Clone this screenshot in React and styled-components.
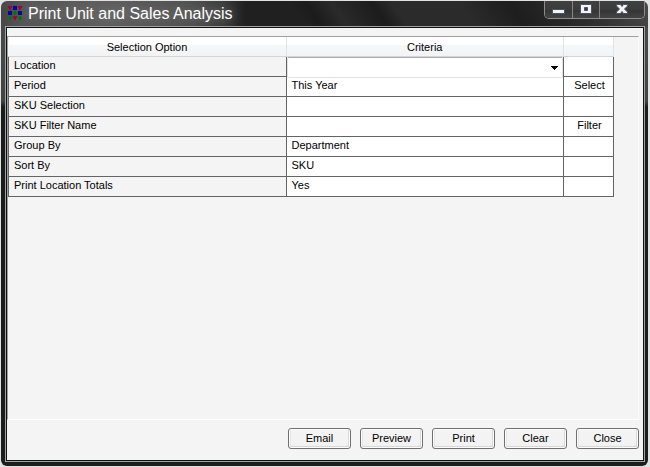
import { useState } from "react";
import styled, { createGlobalStyle } from "styled-components";

const rows = [
    { option: "Location", type: "select" },
    { option: "Period", value: "This Year", action: "Select" },
    { option: "SKU Selection" },
    { option: "SKU Filter Name", action: "Filter" },
    { option: "Group By", value: "Department" },
    { option: "Sort By", value: "SKU" },
    { option: "Print Location Totals", value: "Yes" },
];

const commands = ["Email", "Preview", "Print", "Clear", "Close"];

const GlobalStyle = createGlobalStyle`
    * { box-sizing: border-box; }

    body {
        margin: 0;
        background-color: #dfe3e1;
        color: #000;
        font-family: "Liberation Sans", Arial, sans-serif;
        font-size: 11px;
    }

    button, select {
        font: inherit;
        color: inherit;
    }
`

const Window = styled.div`
    display: flex;
    flex-direction: column;
    height: 100vh;
    padding: 1px 2px 1px 1px;
`

const Frame = styled.div`
    display: flex;
    flex-direction: column;
    flex: 1;
    min-height: 0;
    padding: 0 3px 4px 4px;
    border-radius: 6px;
    background:
        linear-gradient(90deg, #484848 0, #555 20px, #5e5e5e 110px, #505050 190px, #3c3c3c 222px, rgba(40, 40, 40, 0) 244px) 0 0 / 100% 26px no-repeat,
        linear-gradient(55deg, #202020 250px, #1c1c1c 264px, #2a2a2a 284px, #1c1c1c 318px, #2b2b2b 334px, #2b2b2b 390px, #1e1e1e 430px, #2c2c2c 480px, #505050 560px) 0 0 / 100% 26px no-repeat,
        linear-gradient(#4b4d4c 0, #414443 100px, #1b1e1d 106px, #1b1e1d 100%);
`

const TitleBar = styled.header`
    display: flex;
    align-items: flex-start;
    justify-content: space-between;
    height: 25px;
    flex: none;
`

const Title = styled.h1`
    display: flex;
    align-items: center;
    gap: 5px;
    height: 25px;
    margin: 0;
    padding-left: 3px;
    color: #fff;
    font-size: 16px;
    font-weight: 400;
    white-space: nowrap;
    text-shadow: 0 0 10px #888;
`

const WindowButtons = styled.div`
    display: flex;
    height: 18px;
    border: 1px solid #8c8c8c;
    border-top: 0;
    border-radius: 0 0 5px 5px;
    overflow: hidden;
`

const WindowButton = styled.button`
    display: flex;
    align-items: center;
    justify-content: center;
    width: ${props => props.$wide ? "45px" : "27px"};
    padding: 0;
    border: 0;
    border-left: ${props => props.$first ? "0" : "1px solid #858585"};
    background: linear-gradient(#404040, #3c3c3c 50%, #343434 51%, #444);
`

const Client = styled.main`
    display: flex;
    flex-direction: column;
    flex: 1;
    min-height: 0;
    border: 1px solid #111;
    outline: 1px solid #a0a3a2;
    margin: 1px;
    padding: 8px 4px 0 0;
    background-color: #f4f4f4;
`

const GridPanel = styled.section`
    flex: 1;
    min-height: 0;
    padding-right: 24px;
    border: 1px solid #a0a0a0;
    border-right-color: #fcfcfc;
    border-bottom-color: #fff;
`

const Grid = styled.table`
    width: 100%;
    border-collapse: collapse;
    table-layout: fixed;
`

const HeadCell = styled.th`
    width: ${props => props.$width};
    height: 19px;
    padding: 2px 0 0;
    border-right: 1px solid #e0e2e4;
    border-bottom: 1px solid #d5d5d5;
    background: linear-gradient(#fff 40%, #f6f7f9 41%, #f2f3f4);
    font-weight: 400;
    line-height: 16px;
    text-align: center;
`

const Cell = styled.td`
    height: 20px;
    padding: ${props => props.$flush ? "0" : "0 5px 2px"};
    border: 1px solid #646464;
    background-color: ${props => props.$label ? "#f4f4f4" : "#fff"};
    line-height: 16px;
    text-align: ${props => props.$center ? "center" : "left"};
`

const DropDown = styled.div`
    position: relative;
    height: 21px;
    margin-bottom: -2px;
    border: 1px solid #e1e3ea;
    border-top-color: #abadb3;
    border-radius: 2px;
    background-color: #fff;

    select {
        display: block;
        width: 100%;
        height: 19px;
        padding: 0 18px 0 4px;
        border: 0;
        appearance: none;
        background: none;
    }

    svg {
        position: absolute;
        top: 8px;
        right: 4px;
        pointer-events: none;
    }
`

const CellButton = styled.button`
    display: block;
    width: 100%;
    height: 19px;
    padding: 0 2px 2px 4px;
    border: 0;
    background: none;
    line-height: 16px;
`

const Commands = styled.footer`
    display: flex;
    justify-content: flex-end;
    gap: 9px;
    padding: 8px 0 11px;
`

const CommandButton = styled.button`
    width: 63px;
    height: 21px;
    padding: 0;
    border: 1px solid #707070;
    border-radius: 3px;
    background: linear-gradient(#f4f4f4, #f2f2f2);
    box-shadow: inset 0 0 0 1px #fcfcfc, inset -2px -2px 0 #d8d8d8, inset 2px 0 0 #e6e6e6;
    line-height: 17px;
`

function AppIcon() {
    return (
        <svg width="15" height="15" viewBox="0 0 15 15" shapeRendering="crispEdges" aria-hidden="true">
            <path d="M0 0h4v2H3v2H1V2H0zM10 0h4v2h-1v2h-2V2h-1zM5 10h4v2H8v2H6v-2H5z" fill="#9b0632" />
            <path d="M5 0h4v4H5zM0 5h4v4H0zM10 5h4v4h-4z" fill="#0505a0" />
            <path d="M6 5h2v1h1v2H8v1H6V8H5V6h1zM1 10h2v1h1v2H3v1H1v-1H0v-2h1zM11 10h2v1h1v2h-1v1h-2v-1h-1v-2h1z" fill="#08701a" />
        </svg>
    );
}

export default function App() {
    const [location, setLocation] = useState("");

    return (
        <>
            <GlobalStyle />
            <Window>
                <Frame>
                    <TitleBar>
                        <Title><AppIcon />Print Unit and Sales Analysis</Title>
                        <WindowButtons>
                            <WindowButton $first aria-label="Minimize">
                                <svg width="13" height="17" viewBox="0 0 13 17" aria-hidden="true">
                                    <path d="M.5 8.500h12v4H.5z" fill="#f4f4f4" stroke="#4d506b" />
                                </svg>
                            </WindowButton>
                            <WindowButton aria-label="Maximize">
                                <svg width="13" height="17" viewBox="0 0 13 17" aria-hidden="true">
                                    <path d="M.5 3.500h11v9H.5zM4.500 6.500v3h3v-3z" fill="#f4f4f4" fillRule="evenodd" stroke="#4d506b" />
                                </svg>
                            </WindowButton>
                            <WindowButton $wide aria-label="Close window">
                                <svg width="13" height="17" viewBox="0 0 13 17" aria-hidden="true">
                                    <path d="M.5 3.500h4l1.500 2 1.500-2h4v1.500L8.500 8l3 3v1.500h-4L6 10.500l-1.500 2h-4V11l3-3-3-3z" fill="#f4f4f4" stroke="#4d506b" />
                                </svg>
                            </WindowButton>
                        </WindowButtons>
                    </TitleBar>

                    <Client>
                        <GridPanel>
                            <Grid>
                                <thead>
                                    <tr>
                                        <HeadCell>Selection Option</HeadCell>
                                        <HeadCell>Criteria</HeadCell>
                                        <HeadCell $width="50px" aria-label="Action" />
                                    </tr>
                                </thead>
                                <tbody>
                                    {rows.map(row => (
                                        <tr key={row.option}>
                                            <Cell $label>
                                                {row.type === "select" ? <label htmlFor="location">{row.option}</label> : row.option}
                                            </Cell>
                                            <Cell $flush={row.type === "select"}>
                                                {row.type === "select" ? (
                                                    <DropDown>
                                                        <select id="location" value={location} onChange={e => setLocation(e.target.value)}>
                                                            <option value=""></option>
                                                        </select>
                                                        <svg width="7" height="4" viewBox="0 0 7 4" shapeRendering="crispEdges" aria-hidden="true">
                                                            <path d="M0 0h7v1H6v1H5v1H4v1H3V3H2V2H1V1H0z" />
                                                        </svg>
                                                    </DropDown>
                                                ) : row.value}
                                            </Cell>
                                            <Cell $flush $center>
                                                {row.action && <CellButton>{row.action}</CellButton>}
                                            </Cell>
                                        </tr>
                                    ))}
                                </tbody>
                            </Grid>
                        </GridPanel>

                        <Commands>
                            {commands.map(name => (
                                <CommandButton key={name}>{name}</CommandButton>
                            ))}
                        </Commands>
                    </Client>
                </Frame>
            </Window>
        </>
    );
}
